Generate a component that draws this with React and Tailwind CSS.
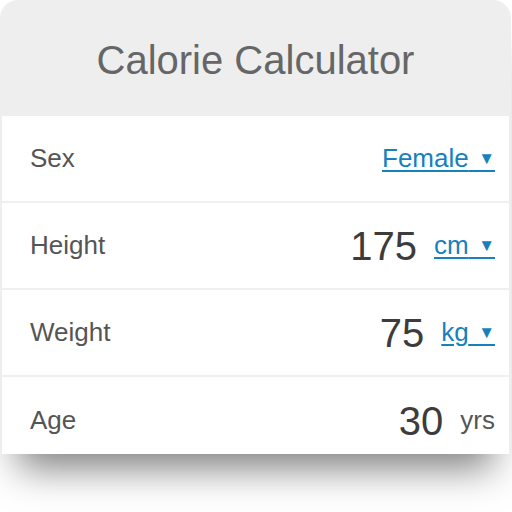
import React from "react";

const font = { fontFamily: '"Liberation Sans", Arial, sans-serif' };

const Unit = ({ label, dropdown }) =>
  dropdown ? (
    <span className="text-[26px] text-[#1581bd] underline decoration-2 underline-offset-[3px] cursor-pointer whitespace-pre">
      {label}
      <span className="text-[17px] align-[3px]">{"  ▼"}</span>
    </span>
  ) : (
    <span className="text-[26px] text-[#555]">{label}</span>
  );

const Row = ({ label, value, unit, dropdown, last }) => (
  <div
    className={
      "h-[87px] shrink-0 flex items-center justify-between pl-[28px] pr-[14px] " +
      (last ? "" : "border-b-2 border-[#f0f0f0]")
    }
  >
    <span className="text-[26px] text-[#555]">{label}</span>
    <div className="flex items-center gap-[17px]">
      {value && <span className="text-[40px] text-[#3c3c3c] leading-none">{value}</span>}
      <Unit label={unit} dropdown={dropdown} />
    </div>
  </div>
);

export default function App() {
  return (
    <div className="w-[512px] h-[512px] overflow-hidden bg-white" style={font}>
      <div className="w-[511px] h-[454px] flex flex-col overflow-hidden rounded-t-[18px] bg-white border-x-2 border-[#eeeeee] shadow-[0_32px_36px_-18px_rgba(0,0,0,0.5)]">
        <div className="h-[116px] shrink-0 bg-[#eeeeee] flex items-center justify-center">
          <h1 className="text-[40px] text-[#666] pt-[4px]">Calorie Calculator</h1>
        </div>
        <Row label="Sex" unit="Female" dropdown />
        <Row label="Height" value="175" unit="cm" dropdown />
        <Row label="Weight" value="75" unit="kg" dropdown />
        <Row label="Age" value="30" unit="yrs" last />
      </div>
    </div>
  );
}
